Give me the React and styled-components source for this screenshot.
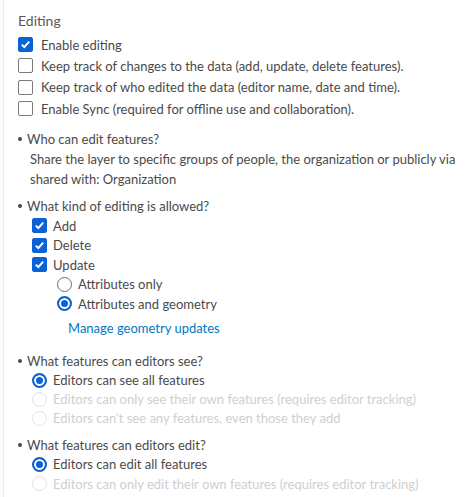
import React from "react";
import styled, { createGlobalStyle } from "styled-components";

const GlobalStyle = createGlobalStyle`
  html, body {
    margin: 0;
    padding: 0;
    background: #ffffff;
    overflow: hidden;
  }
  body {
    font-family: Lato, "Open Sans", sans-serif;
    font-size: 13px;
    color: #4a4a4a;
  }
`;

const BLUE = "#0a62d6";

const Page = styled.div`
  margin-left: 3px;
  border-left: 1px solid #ebebeb;
  min-height: 497px;
  padding: 11px 0 0 14px;
  box-sizing: border-box;
`;

const Title = styled.div`
  font-size: 14px;
  line-height: 20px;
  color: #595959;
`;

const List = styled.div`
  display: flex;
  flex-direction: column;
  margin-top: 3px;
`;

const Row = styled.label`
  display: flex;
  align-items: center;
  gap: ${(p) => p.$gap || 6}px;
  height: ${(p) => p.$h || 21.3}px;
  padding-left: ${(p) => p.$indent || 0}px;
  white-space: nowrap;
  color: ${(p) => (p.$disabled ? "#cfcfcf" : "#4a4a4a")};
`;

const Box = styled.span`
  width: 15px;
  height: 15px;
  box-sizing: border-box;
  border-radius: 2px;
  flex: none;
  display: flex;
  align-items: center;
  justify-content: center;
  background: ${(p) => (p.$checked ? BLUE : "#fff")};
  border: 1px solid ${(p) => (p.$checked ? BLUE : "#7a7a7a")};
`;

const Radio = styled.span`
  width: 15px;
  height: 15px;
  box-sizing: border-box;
  border-radius: 50%;
  flex: none;
  background: ${(p) => (p.$checked ? BLUE : "#fff")};
  border: ${(p) =>
    p.$checked ? `2px solid ${BLUE}` : p.$disabled ? "1px solid #e3e3e3" : "1px solid #6e6e6e"};
  box-shadow: ${(p) => (p.$checked ? "inset 0 0 0 2px #fff" : "none")};
`;

const Section = styled.div`
  margin-top: ${(p) => p.$top || 0}px;
`;

const Question = styled.div`
  display: flex;
  align-items: center;
  height: 20px;
  white-space: nowrap;
  &::before {
    content: "";
    width: 4px;
    height: 4px;
    border-radius: 50%;
    background: #4a4a4a;
    margin: 0 5px 0 0;
  }
`;

const Body = styled.div`
  padding-left: ${(p) => p.$indent || 14}px;
  display: flex;
  flex-direction: column;
`;

const Desc = styled.div`
  padding-left: 12px;
  line-height: 18.5px;
  margin-top: 1px;
  white-space: nowrap;
  overflow: hidden;
`;

const Link = styled.a`
  display: block;
  color: #0079c1;
  text-decoration: none;
  margin: 4px 0 0 36px;
  line-height: 20px;
  cursor: pointer;
`;

function Check({ checked }) {
  return (
    <Box $checked={checked}>
      {checked && (
        <svg width="11" height="11" viewBox="0 0 11 11">
          <path d="M1.8 5.6 L4.3 8.1 L9.2 2.6" fill="none" stroke="#fff" strokeWidth="2" />
        </svg>
      )}
    </Box>
  );
}

export default function App() {
  return (
    <>
      <GlobalStyle />
      <Page>
        <Title>Editing</Title>
        <List>
          <Row $gap={8}><Check checked />Enable editing</Row>
          <Row $gap={8}><Check />Keep track of changes to the data (add, update, delete features).</Row>
          <Row $gap={8}><Check />Keep track of who edited the data (editor name, date and time).</Row>
          <Row $gap={8}><Check />Enable Sync (required for offline use and collaboration).</Row>
        </List>

        <Section $top={10}>
          <Question>Who can edit features?</Question>
          <Desc>Share the layer to specific groups of people, the organization or publicly via</Desc>
          <Desc>shared with: Organization</Desc>
        </Section>

        <Section $top={8}>
          <Question>What kind of editing is allowed?</Question>
          <Body>
            <Row $h={19.5}><Check checked />Add</Row>
            <Row $h={19.5}><Check checked />Delete</Row>
            <Row $h={19.5}><Check checked />Update</Row>
            <Row $h={19.5} $indent={25}><Radio />Attributes only</Row>
            <Row $h={19.5} $indent={25}><Radio $checked />Attributes and geometry</Row>
            <Link>Manage geometry updates</Link>
          </Body>
        </Section>

        <Section $top={13}>
          <Question>What features can editors see?</Question>
          <Body>
            <Row $h={19}><Radio $checked />Editors can see all features</Row>
            <Row $h={19} $disabled><Radio $disabled />Editors can only see their own features (requires editor tracking)</Row>
            <Row $h={19} $disabled><Radio $disabled />Editors can't see any features, even those they add</Row>
          </Body>
        </Section>

        <Section $top={7}>
          <Question>What features can editors edit?</Question>
          <Body>
            <Row $h={19.5}><Radio $checked />Editors can edit all features</Row>
            <Row $h={19.5} $disabled><Radio $disabled />Editors can only edit their own features (requires editor tracking)</Row>
          </Body>
        </Section>
      </Page>
    </>
  );
}
